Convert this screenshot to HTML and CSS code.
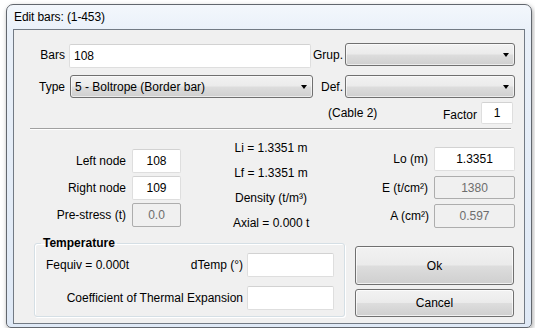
FILE: index.html
```html
<!DOCTYPE html>
<html>
<head>
<meta charset="utf-8">
<title>Edit bars</title>
<link rel="stylesheet" href="styles.css">
</head>
<body>
<div class="window">
  <div class="titlebar">Edit bars: (1-453)</div>
  <div class="client">
    <div class="top">
      <div class="grid">
        <span class="lbl">Bars</span>
        <div class="cell"><div class="input left bars">108</div></div>
        <span class="lbl2">Grup.</span>
        <div class="select w170"><span class="sel-text"></span><i class="arrow"></i></div>

        <span class="lbl">Type</span>
        <div class="cell"><div class="select type"><span class="sel-text">5 - Boltrope (Border bar)</span><i class="arrow"></i></div></div>
        <span class="lbl2">Def.</span>
        <div class="select w170"><span class="sel-text"></span><i class="arrow"></i></div>
      </div>
      <div class="row3">
        <span class="cable">(Cable 2)</span>
        <span class="factor-lbl">Factor</span>
        <div class="input center factor">1</div>
      </div>
      <div class="sep"></div>
    </div>

    <div class="middle">
      <div class="colA">
        <div class="frow"><span class="flbl">Left node</span><div class="input center nodein">108</div></div>
        <div class="frow"><span class="flbl">Right node</span><div class="input center nodein">109</div></div>
        <div class="frow"><span class="flbl">Pre-stress (t)</span><div class="input center nodein disabled">0.0</div></div>
      </div>
      <div class="colB">
        <div class="info">Li = 1.3351 m</div>
        <div class="info">Lf = 1.3351 m</div>
        <div class="info">Density (t/m³)</div>
        <div class="info">Axial = 0.000 t</div>
      </div>
      <div class="colC">
        <div class="frow"><span class="flbl wide">Lo (m)</span><div class="input center propin">1.3351</div></div>
        <div class="frow r2"><span class="flbl wide">E (t/cm²)</span><div class="input center propin disabled">1380</div></div>
        <div class="frow r3"><span class="flbl wide a">A (cm²)</span><div class="input center propin disabled">0.597</div></div>
      </div>
    </div>

    <div class="bottom">
      <fieldset class="group">
        <legend>Temperature</legend>
        <div class="trow">
          <div class="tlabels split"><span>Fequiv = 0.000t</span><span>dTemp (°)</span></div>
          <div class="input tin"></div>
        </div>
        <div class="trow second">
          <div class="tlabels"><span>Coefficient of Thermal Expansion</span></div>
          <div class="input tin"></div>
        </div>
      </fieldset>
      <div class="buttons">
        <div class="btn ok">Ok</div>
        <div class="btn cancel">Cancel</div>
      </div>
    </div>
  </div>
</div>
</body>
</html>
```
FILE: styles.css
```css
* { box-sizing: border-box; }
html, body { margin: 0; padding: 0; background: #ffffff; }
body {
  font-family: "Liberation Sans", Arial, sans-serif;
  font-size: 12px;
  color: #000;
}

.window {
  margin: 4px 0 0 6px;
  width: 526px;
  height: 324px;
  border: 1px solid #62676e;
  border-radius: 7px 7px 5px 5px;
  background: linear-gradient(to bottom, #f3f7fc 0px, #e9f0f9 28px, #dfe9f6 100%);
  padding: 0 6px;
  box-shadow: 1px 2px 5px rgba(0, 0, 0, 0.35);
  display: flex;
  flex-direction: column;
}

.titlebar {
  height: 24px;
  line-height: 24px;
  padding-left: 1px;
  color: #000;
  font-size: 12px;
  letter-spacing: -0.1px;
}

.client {
  height: 295px;
  border: 1px solid #727a84;
  background: #f0f0f0;
  flex: none;
}

/* top section */
.top { padding: 13px 0 0 16px; }
.grid {
  display: grid;
  grid-template-columns: 35px 246px 34px 170px;
  grid-template-rows: 25px 23px;
  row-gap: 7px;
  align-items: start;
}
.lbl, .lbl2 {
  text-align: right;
  display: flex;
  align-items: center;
  justify-content: flex-end;
  height: 24px;
}
.lbl2 { padding-right: 2px; height: 23px; }
.cell { height: 24px; }

.input {
  background: #fff;
  border: 1px solid #dedede;
  border-top-color: #d2d2d2;
  border-radius: 2px;
  height: 24px;
  display: flex;
  align-items: center;
  white-space: nowrap;
}
.input.left { padding-left: 4px; }
.input.center { justify-content: center; }
.input.disabled {
  background: #f0f0f0;
  border-color: #adadad;
  color: #6d6d6d;
}
.bars { width: 242px; margin: 1px 0 0 4px; }

.select {
  height: 23px;
  border: 1px solid #707070;
  border-radius: 3px;
  background: linear-gradient(to bottom, #f2f2f2 0%, #ebebeb 48%, #dddddd 52%, #cfcfcf 100%);
  box-shadow: inset 0 0 0 1px rgba(255, 255, 255, 0.6);
  display: flex;
  align-items: center;
  padding: 0 5px 0 4px;
}
.w170 { width: 170px; }
.type { width: 243px; margin-left: 5px; }
.sel-text { flex: 1; white-space: nowrap; overflow: hidden; }
.arrow {
  width: 0;
  height: 0;
  border-left: 3.5px solid transparent;
  border-right: 3.5px solid transparent;
  border-top: 4px solid #000;
  margin-top: 1px;
}

.row3 {
  margin-top: 4px;
  height: 22px;
  display: flex;
  align-items: center;
  padding-right: 2px;
  width: 485px;
}
.cable { margin-left: 298px; margin-top: -1px; }
.factor-lbl { margin-left: auto; margin-right: 4px; margin-top: 3px; }
.factor { width: 32px; height: 22px; }

.sep {
  margin-top: 4px;
  width: 481px;
  height: 2px;
  border-top: 1px solid #a0a0a0;
  border-bottom: 1px solid #ffffff;
}

/* middle section */
.middle {
  height: 106px;
  display: flex;
  align-items: flex-start;
  padding-left: 16px;
}
.colA {
  margin-top: 19px;
  width: 151px;
  display: flex;
  flex-direction: column;
  gap: 3px;
}
.frow {
  display: flex;
  align-items: center;
  height: 24px;
}
.flbl {
  width: 96px;
  margin-right: 6px;
  text-align: right;
  white-space: nowrap;
}
.nodein { width: 49px; }
.colB {
  margin-top: 141px;
  margin-top: 11px;
  margin-left: 52px;
  width: 76px;
  display: flex;
  flex-direction: column;
  gap: 10px;
}
.info { line-height: 15px; text-align: center; white-space: nowrap; }
.colC {
  margin-top: 17px;
  display: flex;
  flex-direction: column;
}
.colC .r2 { margin-top: 5px; height: 23px; }
.colC .r3 { margin-top: 5px; }
.flbl.wide { width: 119px; }
.flbl.a { padding-right: 0; margin-right: 5px; width: 120px; }
.propin { width: 81px; }
.colC .r2 .propin { height: 23px; }

/* bottom section */
.bottom {
  display: flex;
  align-items: flex-start;
  padding-left: 20px;
}
.group {
  margin: 0;
  width: 311px;
  height: 81px;
  min-width: 0;
  border: 1px solid #d5dfe5;
  border-radius: 3px;
  box-shadow: inset 1px 1px 0 #ffffff, 1px 1px 0 #ffffff;
  padding: 3px 10px 0 6px;
}
.group legend {
  padding: 0 2px;
  font-weight: bold;
  line-height: 14px;
  font-size: 12px;
}
.trow {
  display: flex;
  align-items: center;
  height: 24px;
}
.trow.second { margin-top: 9px; }
.tlabels {
  width: 202px;
  margin-right: 4px;
  display: flex;
  justify-content: flex-end;
  white-space: nowrap;
}
.tlabels.split {
  justify-content: space-between;
  padding-left: 5px;
}
.tin { width: 87px; }

.buttons {
  margin-left: 10px;
  margin-top: 10px;
  display: flex;
  flex-direction: column;
  gap: 4px;
}
.btn {
  width: 159px;
  border: 1px solid #707070;
  border-radius: 3px;
  background: linear-gradient(to bottom, #f2f2f2 0%, #ebebeb 48%, #dddddd 52%, #cfcfcf 100%);
  box-shadow: inset 0 0 0 1px rgba(255, 255, 255, 0.7);
  display: flex;
  align-items: center;
  justify-content: center;
}
.ok { height: 39px; }
.cancel { height: 28px; }
```
